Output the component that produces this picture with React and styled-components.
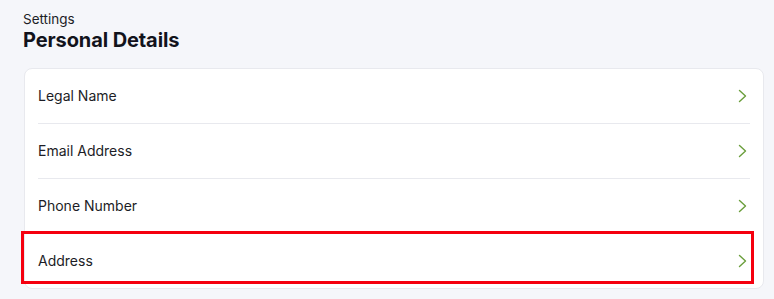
import React from "react";
import styled, { createGlobalStyle } from "styled-components";

const Global = createGlobalStyle`
  html, body { margin: 0; padding: 0; background: #f5f6fa; }
  body { font-family: Inter, "Noto Sans", sans-serif; -webkit-font-smoothing: antialiased; }
`;

const Page = styled.div`
  padding: 11px 10px 12px 23px;
  min-height: 299px;
  box-sizing: border-box;
  background: #f5f6fa;
`;

const Eyebrow = styled.div`
  font-size: 13.5px;
  line-height: 17px;
  color: #1c1d26;
`;

const Title = styled.h1`
  margin: 0;
  font-size: 20px;
  line-height: 24px;
  font-weight: 700;
  color: #12131c;
  letter-spacing: -0.1px;
`;

const Card = styled.div`
  margin-top: 16px;
  margin-left: 1px;
  background: #ffffff;
  border: 1px solid #e8e9ee;
  border-radius: 8px;
  padding: 0 13px;
`;

const Row = styled.div`
  position: relative;
  display: flex;
  align-items: center;
  justify-content: space-between;
  height: 53px;
  padding: 0 3px 1px 0;
  border-bottom: ${(p) => (p.$last ? "none" : "1px solid #e8e9ee")};
  font-size: 14px;
  color: #1c1d26;
`;

const Highlight = styled.div`
  position: absolute;
  left: -17px;
  right: -4px;
  top: -3px;
  bottom: 4px;
  border: 3px solid #f5000f;
  pointer-events: none;
`;

const Chevron = () => (
  <svg width="9" height="14" viewBox="0 0 9 14" fill="none">
    <path d="M1.5 1.5 L7.5 7 L1.5 12.5" stroke="#6a9e3b" strokeWidth="1.4" strokeLinecap="round" strokeLinejoin="round" />
  </svg>
);

const items = ["Legal Name", "Email Address", "Phone Number", "Address"];

export default function App() {
  return (
    <>
      <Global />
      <Page>
        <Eyebrow>Settings</Eyebrow>
        <Title>Personal Details</Title>
        <Card>
          {items.map((it, i) => (
            <Row key={it} $last={i === items.length - 1}>
              <span>{it}</span>
              <Chevron />
              {i === items.length - 1 && <Highlight />}
            </Row>
          ))}
        </Card>
      </Page>
    </>
  );
}
